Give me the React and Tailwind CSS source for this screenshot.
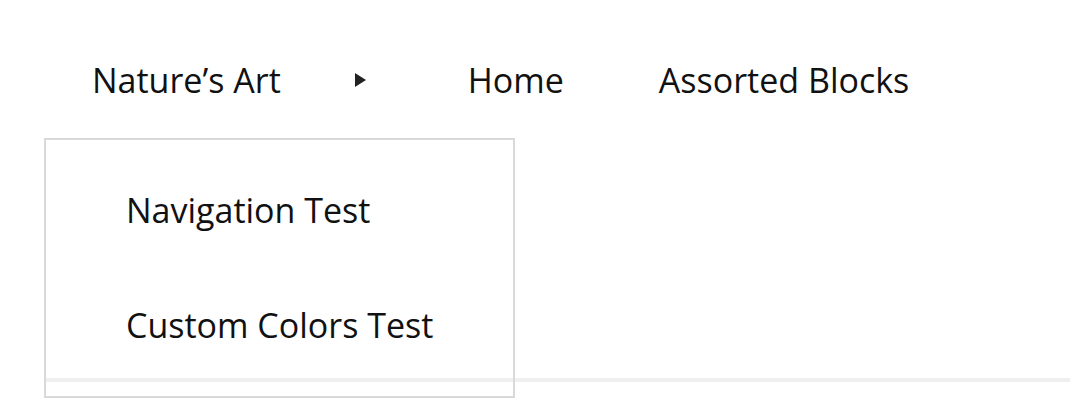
export default function App() {
  return (
    <div
      className="relative w-[1070px] h-[414px] bg-white text-[#111] overflow-hidden"
      style={{ fontFamily: '"Open Sans", "Noto Sans", sans-serif' }}
    >
      <nav className="pt-[58px] pl-[92px]">
        <ul className="flex items-center text-[34px] leading-[44px]">
          <li className="flex items-center">
            <span>Nature’s Art</span>
            <svg className="ml-[74px] w-[11px] h-[16px]" viewBox="0 0 11 16">
              <path d="M0 1 L11 8 L0 15 Z" fill="#222" />
            </svg>
          </li>
          <li className="ml-[102px]">Home</li>
          <li className="ml-[95px]">Assorted Blocks</li>
        </ul>
      </nav>

      <div className="absolute left-[44px] right-0 top-[378px] h-[4px] bg-[#efefef]" />

      <div className="absolute left-[44px] top-[138px] w-[471px] h-[260px] border-2 border-[#d9d9d9]">
        <ul className="pl-[80px] pt-[48px] text-[34px] leading-[44px]">
          <li>Navigation Test</li>
          <li className="mt-[71px]">Custom Colors Test</li>
        </ul>
      </div>
    </div>
  );
}
